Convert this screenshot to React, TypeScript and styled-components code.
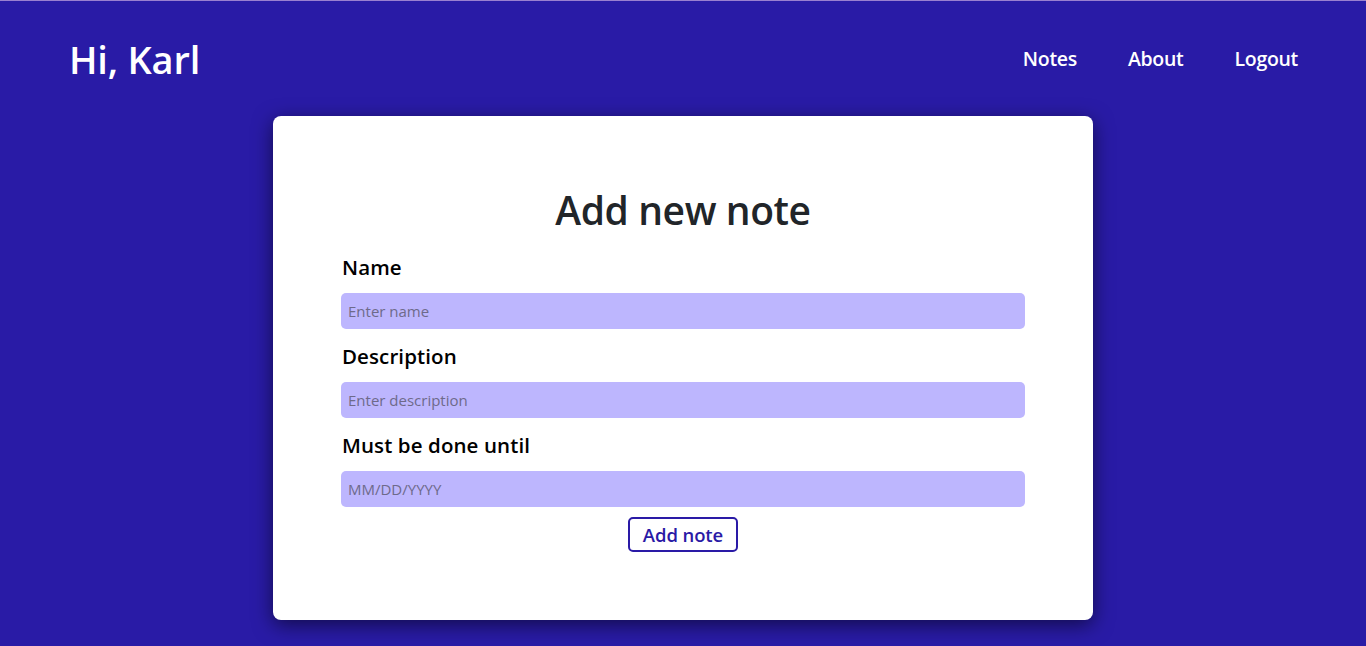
import styled, { createGlobalStyle } from "styled-components";

const GlobalStyle = createGlobalStyle`
	html, body {
		margin: 0;
		padding: 0;
	}

	body {
		min-height: 100vh;
		background: #291ba6;
		border-top: 1px solid #9a80d0;
		box-sizing: border-box;
		font-family: "Open Sans", "Noto Sans", sans-serif;
	}

	* {
		box-sizing: border-box;
	}
`;

const Header = styled.header`
	display: flex;
	align-items: center;
	justify-content: space-between;
	height: 115px;
	padding: 0 68px 0 69px;
	color: #fff;
`;

const Greeting = styled.h1`
	margin: 0;
	font-size: 38px;
	font-weight: 600;
	letter-spacing: -0.2px;
`;

const Nav = styled.nav`
	display: flex;
	gap: 51px;
`;

const NavLink = styled.a`
	color: #fff;
	font-size: 19.5px;
	font-weight: 600;
	text-decoration: none;
	letter-spacing: -0.3px;
	cursor: pointer;
`;

const Card = styled.main`
	width: 820px;
	margin: 0 auto;
	padding: 70px 68px 68px;
	background: #fff;
	border-radius: 8px;
	box-shadow: 0 5px 20px rgba(0, 0, 0, 0.55);
`;

const Title = styled.h2`
	margin: 0 0 18px;
	text-align: center;
	font-size: 39px;
	line-height: 48px;
	font-weight: 600;
	color: #212529;
	letter-spacing: -0.4px;
`;

const Form = styled.form`
	display: flex;
	flex-direction: column;
`;

const Label = styled.label<{ $first?: boolean }>`
	display: block;
	margin: ${(p) => (p.$first ? "0" : "12px")} 0 11px 1px;
	font-size: 20.5px;
	line-height: 30px;
	font-weight: 600;
	color: #000;
	letter-spacing: 0.1px;
`;

const Input = styled.input`
	width: 100%;
	height: 36px;
	padding: 0 7px;
	border: none;
	border-radius: 5px;
	background: #bdb6fe;
	font-family: inherit;
	font-size: 15px;
	color: #212529;
	outline: none;

	&::placeholder {
		color: #6e6a8a;
	}
`;

const Button = styled.button`
	align-self: center;
	margin-top: 10px;
	width: 110px;
	height: 35px;
	border: 2px solid #2a1aa6;
	border-radius: 5px;
	background: #fff;
	color: #2a1aa6;
	font-family: inherit;
	font-size: 18.5px;
	font-weight: 600;
	letter-spacing: -0.1px;
	cursor: pointer;
`;

export default function App() {
	return (
		<>
			<GlobalStyle />
			<Header>
				<Greeting>Hi, Karl</Greeting>
				<Nav>
					<NavLink>Notes</NavLink>
					<NavLink>About</NavLink>
					<NavLink>Logout</NavLink>
				</Nav>
			</Header>
			<Card>
				<Title>Add new note</Title>
				<Form onSubmit={(e) => e.preventDefault()}>
					<Label $first htmlFor="name">Name</Label>
					<Input id="name" placeholder="Enter name" />
					<Label htmlFor="description">Description</Label>
					<Input id="description" placeholder="Enter description" />
					<Label htmlFor="until">Must be done until</Label>
					<Input id="until" placeholder="MM/DD/YYYY" />
					<Button type="submit">Add note</Button>
				</Form>
			</Card>
		</>
	);
}
